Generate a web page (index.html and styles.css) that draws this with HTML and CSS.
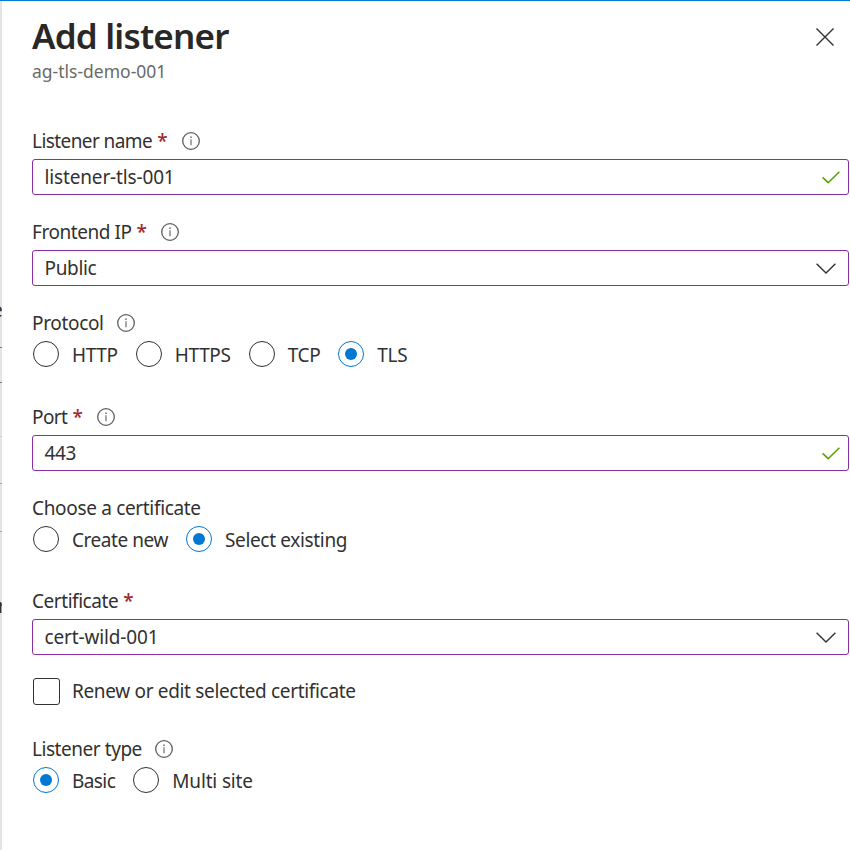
FILE: index.html
```
<!DOCTYPE html>
<html lang="en">
  <head>
    <meta charset="UTF-8" />
    <meta name="viewport" content="width=device-width, initial-scale=1.0" />
    <title>Add listener</title>
    <link rel="stylesheet" href="styles.css">
  </head>
  <body>
    <!-- shared icons -->
    <svg class="sprite">
      <symbol id="info" viewBox="0 0 18 18">
        <circle cx="9" cy="9" r="8.3" fill="none" stroke="#605e5c" stroke-width="1.3" />
        <path d="M9 7.2V13.2" stroke="#7a7876" stroke-width="1.3" />
        <circle cx="9" cy="5.2" r="0.9" fill="#7a7876" />
      </symbol>
      <symbol id="check" viewBox="0 0 18 13">
        <path d="M0.6 6.3L6.2 11.7L17.4 0.7" fill="none" stroke="#57a300" stroke-width="1.6" />
      </symbol>
      <symbol id="chevron" viewBox="0 0 20 11">
        <path d="M0.6 0.7L10 9.9L19.4 0.7" fill="none" stroke="#323130" stroke-width="1.4" />
      </symbol>
    </svg>

    <div class="underlay">
      <span class="peek peek-e">e</span>
      <div class="rule rule-first"></div>
      <div class="rule rule-second"></div>
      <div class="rule rule-light"></div>
      <div class="rule rule-row"></div>
      <div class="rule rule-last"></div>
      <span class="peek peek-r">r</span>
    </div>

    <main class="panel">
      <header class="panel-header">
        <div>
          <h1>Add listener</h1>
          <p class="subtitle">ag-tls-demo-001</p>
        </div>
        <svg class="close" viewBox="0 0 18 18">
          <path d="M0.5 0.5L17.5 17.5M17.5 0.5L0.5 17.5" stroke="#323130" stroke-width="1.4" />
        </svg>
      </header>

      <form>
        <div class="field">
          <div class="label"><span class="tighter">Listener name</span><b class="required">*</b><svg class="info"><use href="#info" /></svg></div>
          <div class="input"><span class="loose">listener-tls-001</span><svg class="check"><use href="#check" /></svg></div>
        </div>

        <div class="field">
          <div class="label"><span class="tight">Frontend IP</span><b class="required">*</b><svg class="info"><use href="#info" /></svg></div>
          <div class="input"><span>Public</span><svg class="chevron"><use href="#chevron" /></svg></div>
        </div>

        <div class="field field-protocol">
          <div class="label"><span>Protocol</span><svg class="info"><use href="#info" /></svg></div>
          <div class="options">
            <div class="option"><i class="radio"></i><span>HTTP</span></div>
            <div class="option"><i class="radio"></i><span>HTTPS</span></div>
            <div class="option"><i class="radio"></i><span>TCP</span></div>
            <div class="option"><i class="radio checked"></i><span>TLS</span></div>
          </div>
        </div>

        <div class="field">
          <div class="label"><span class="tighter">Port</span><b class="required">*</b><svg class="info"><use href="#info" /></svg></div>
          <div class="input"><span>443</span><svg class="check"><use href="#check" /></svg></div>
        </div>

        <div class="field field-source">
          <div class="label"><span>Choose a certificate</span></div>
          <div class="options">
            <div class="option"><i class="radio"></i><span class="tight">Create new</span></div>
            <div class="option"><i class="radio checked"></i><span>Select existing</span></div>
          </div>
        </div>

        <div class="field field-cert">
          <div class="label"><span class="tight">Certificate</span><b class="required">*</b></div>
          <div class="input"><span class="loose">cert-wild-001</span><svg class="chevron"><use href="#chevron" /></svg></div>
        </div>

        <div class="option renew"><i class="checkbox"></i><span>Renew or edit selected certificate</span></div>

        <div class="field">
          <div class="label"><span class="tight">Listener type</span><svg class="info"><use href="#info" /></svg></div>
          <div class="options">
            <div class="option"><i class="radio checked"></i><span class="tighter">Basic</span></div>
            <div class="option"><i class="radio"></i><span class="loose">Multi site</span></div>
          </div>
        </div>
      </form>
    </main>
  </body>
</html>
```
FILE: styles.css
```
* {
  box-sizing: border-box;
}
body {
  margin: 0;
  height: 850px;
  display: flex;
  overflow: hidden;
  border-top: 1px solid #0078d4;
  background: #fff;
  color: #323130;
  font-family: "Noto Sans", "Open Sans", sans-serif;
  font-size: 19px;
  line-height: 26px;
}
.sprite {
  position: absolute;
  width: 0;
  height: 0;
}

/* sliver of the page behind the panel */
.underlay {
  width: 2px;
  flex: none;
  overflow: hidden;
  background: #e4e4e4;
}
.peek {
  display: block;
  width: 12px;
  height: 26px;
  margin-left: -8px;
}
.peek-e {
  margin-top: 296px;
}
.peek-r {
  margin-top: 61px;
  margin-left: -2px;
}
.rule {
  height: 1px;
  background: #a8a8a8;
}
.rule-first {
  margin-top: 24px;
  background: #777;
}
.rule-second {
  margin-top: 34px;
  background: #777;
}
.rule-light {
  margin-top: 53px;
  background: #ccc;
}
.rule-row {
  margin-top: 46px;
}
.rule-last {
  margin-top: 47px;
}

.panel {
  flex: 1;
  padding: 14px 1px 0 30px;
}
.panel-header {
  display: flex;
  justify-content: space-between;
  height: 113px;
}
h1 {
  margin: -1px 0 0;
  font-size: 35px;
  line-height: 44px;
  font-weight: 600;
  letter-spacing: -0.8px;
  color: #292827;
}
.subtitle {
  margin: 0;
  font-size: 17.5px;
  color: #6b6967;
}
.close {
  width: 18px;
  height: 18px;
  margin: 13px 15px 0 0;
}

.field {
  margin-bottom: 24px;
}
.field-protocol {
  margin-bottom: 37px;
}
.field-source {
  margin-bottom: 36px;
}
.field-cert {
  margin-bottom: 23px;
}
.label {
  display: flex;
  align-items: center;
  height: 26px;
  margin-bottom: 5px;
}
.required {
  margin-left: 5px;
  color: #a4262c;
  font-weight: 500;
}
.info {
  width: 18px;
  height: 18px;
  margin-left: 13px;
}
.required + .info {
  margin-left: 14px;
}
.input {
  display: flex;
  align-items: center;
  justify-content: space-between;
  height: 36px;
  padding: 0 8px 0 11.5px;
  border: 1px solid #8a2da5;
  border-radius: 3px;
}
.check {
  width: 18px;
  height: 13px;
}
.chevron {
  width: 20px;
  height: 11px;
  margin-right: 4px;
}

.options {
  display: flex;
  gap: 18px;
  height: 26px;
  padding-left: 1px;
}
.option {
  display: flex;
  align-items: center;
  gap: 13px;
}
.option span,
.label span,
.input span {
  white-space: nowrap;
  letter-spacing: -0.33px;
}
.options span {
  padding-top: 2px;
}
.option .loose,
.input .loose {
  letter-spacing: -0.15px;
}
.option .tight,
.label .tight {
  letter-spacing: -0.45px;
}
.option .tighter,
.label .tighter {
  letter-spacing: -0.58px;
}
.radio {
  display: flex;
  align-items: center;
  justify-content: center;
  width: 26px;
  height: 26px;
  border: 1px solid #323130;
  border-radius: 50%;
}
.checked {
  border-color: #0078d4;
}
.checked::after {
  content: "";
  width: 12px;
  height: 12px;
  border-radius: 50%;
  background: #0078d4;
}
.renew {
  gap: 12px;
  height: 27px;
  margin-bottom: 31px;
  padding-left: 1px;
}
.renew span {
  padding-bottom: 2px;
}
.checkbox {
  width: 27px;
  height: 27px;
  border: 1px solid #323130;
  border-radius: 3px;
}
```
